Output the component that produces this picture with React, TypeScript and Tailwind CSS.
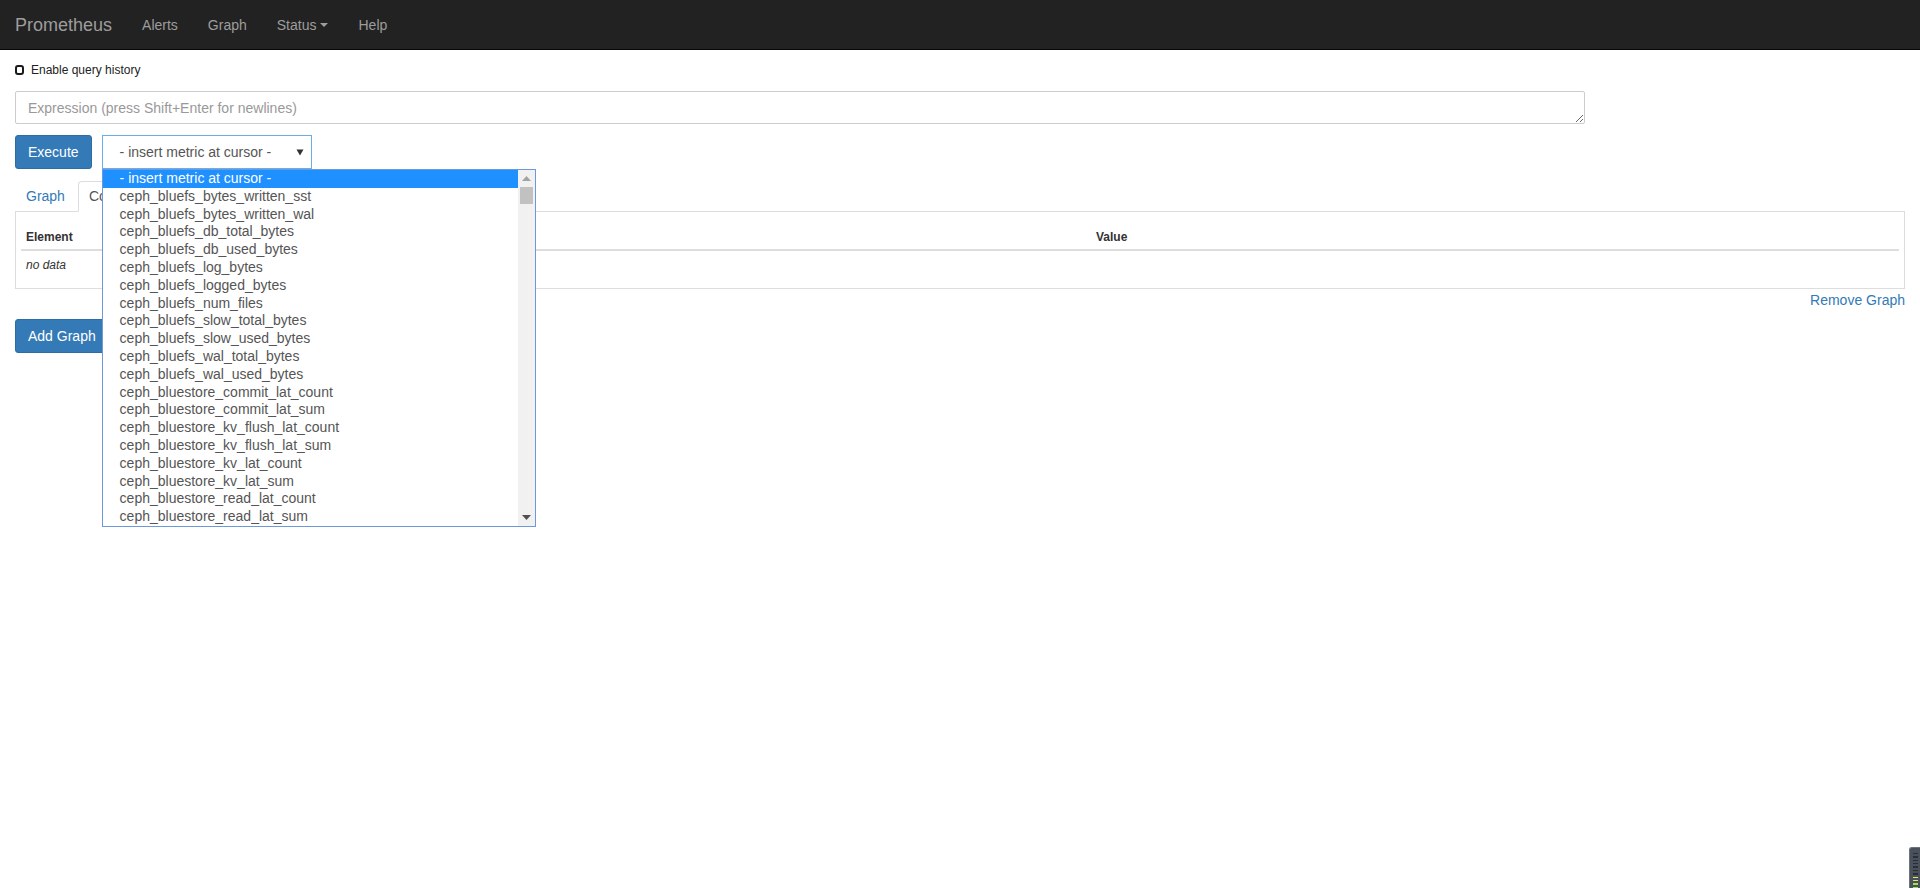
import React from "react";

const items = [
  "ceph_bluefs_bytes_written_sst",
  "ceph_bluefs_bytes_written_wal",
  "ceph_bluefs_db_total_bytes",
  "ceph_bluefs_db_used_bytes",
  "ceph_bluefs_log_bytes",
  "ceph_bluefs_logged_bytes",
  "ceph_bluefs_num_files",
  "ceph_bluefs_slow_total_bytes",
  "ceph_bluefs_slow_used_bytes",
  "ceph_bluefs_wal_total_bytes",
  "ceph_bluefs_wal_used_bytes",
  "ceph_bluestore_commit_lat_count",
  "ceph_bluestore_commit_lat_sum",
  "ceph_bluestore_kv_flush_lat_count",
  "ceph_bluestore_kv_flush_lat_sum",
  "ceph_bluestore_kv_lat_count",
  "ceph_bluestore_kv_lat_sum",
  "ceph_bluestore_read_lat_count",
  "ceph_bluestore_read_lat_sum",
];

export default function App() {
  return (
    <div className="relative min-h-[888px] w-full overflow-hidden bg-white font-['Liberation_Sans',Arial,Helvetica,sans-serif] text-[14px] leading-[20px] text-[#333]">
      {/* Navbar */}
      <nav className="flex h-[50px] items-center border-b border-[#080808] bg-[#222]">
        <span className="px-[15px] text-[18px] leading-[20px] text-[#9d9d9d]">Prometheus</span>
        <span className="px-[15px] text-[#9d9d9d]">Alerts</span>
        <span className="px-[15px] text-[#9d9d9d]">Graph</span>
        <span className="flex items-center px-[15px] text-[#9d9d9d]">
          Status
          <span className="ml-[4px] inline-block h-0 w-0 border-x-[4px] border-t-[4px] border-x-transparent border-t-[#9d9d9d]" />
        </span>
        <span className="px-[15px] text-[#9d9d9d]">Help</span>
      </nav>

      <div className="px-[15px]">
        {/* Query history */}
        <div className="mt-[12px] flex h-[16px] items-center">
          <span className="inline-block h-[10px] w-[9px] rounded-[3px] border-2 border-[#1a1a1a]" />
          <span className="ml-[7px] text-[12px] leading-[16px] text-[#222]">Enable query history</span>
        </div>

        {/* Expression */}
        <textarea
          className="mt-[13px] block h-[33px] w-[1570px] resize-y rounded-[2px] border border-[#ccc] px-[12px] py-[6px] text-[14px] leading-[20px] text-[#555] outline-none placeholder:text-[#999]"
          placeholder="Expression (press Shift+Enter for newlines)"
        />

        {/* Execute row */}
        <div className="mt-[11px] flex h-[34px] items-start">
          <button className="h-[34px] rounded-[3px] border border-[#2e6da4] bg-[#337ab7] px-[12px] text-[14px] leading-[20px] text-white">
            Execute
          </button>
          <div className="relative z-10 ml-[10px]">
            <div className="flex h-[34px] w-[210px] items-center justify-between border border-[#66afe9] bg-white pl-[17px] pr-[6px] text-[#555]">
              <span>- insert metric at cursor -</span>
              <svg width="8" height="7" viewBox="0 0 8 7" className="mr-[1px]">
                <path d="M0.5 0.5 L7.5 0.5 L4 6.5 Z" fill="#333" />
              </svg>
            </div>
            {/* Open listbox */}
            <div className="absolute left-0 top-[34px] h-[358px] w-[434px] overflow-hidden border border-[#6d98dc] bg-white">
              <div className="relative h-full pr-[17px]">
                <div className="h-[17.8px] bg-[#1e90ff] pl-[17px] text-[14px] leading-[17.8px] text-white">
                  - insert metric at cursor -
                </div>
                {items.map((it) => (
                  <div key={it} className="h-[17.8px] whitespace-nowrap pl-[17px] text-[14px] leading-[17.8px] text-[#555]">
                    {it}
                  </div>
                ))}
                {/* scrollbar */}
                <div className="absolute bottom-0 right-0 top-0 flex w-[17px] flex-col items-center bg-[#f1f1f1]">
                  <svg width="9" height="5" viewBox="0 0 9 5" className="mt-[6px]">
                    <path d="M0 5 L4.5 0 L9 5 Z" fill="#a3a3a3" />
                  </svg>
                  <div className="mt-[6px] h-[17px] w-[13px] bg-[#c1c1c1]" />
                  <div className="flex-1" />
                  <svg width="9" height="5" viewBox="0 0 9 5" className="mb-[6px]">
                    <path d="M0 0 L9 0 L4.5 5 Z" fill="#505050" />
                  </svg>
                </div>
              </div>
            </div>
          </div>
        </div>

        {/* Tabs */}
        <div className="mt-[12px] flex h-[31px] border-b border-[#ddd]">
          <div className="mr-[2px] h-[30px] rounded-t-[4px] border border-transparent px-[10px] py-[4px] leading-[20px] text-[#337ab7]">
            Graph
          </div>
          <div className="-mb-px h-[31px] rounded-t-[4px] border border-[#ddd] border-b-white bg-white px-[10px] py-[4px] leading-[20px] text-[#555]">
            Console
          </div>
        </div>

        {/* Panel */}
        <div className="h-[77px] border-x border-b border-[#ddd] px-[5px] pt-[5px]">
          <div className="grid h-[34px] grid-cols-[1070px_1fr] border-b-2 border-[#ddd] text-[12px] font-bold leading-[17px] text-[#333]">
            <div className="flex items-end px-[5px] pb-[3px]">Element</div>
            <div className="flex items-end px-[5px] pb-[3px]">Value</div>
          </div>
          <div className="px-[5px] pt-[6px] text-[12px] italic leading-[17px] text-[#333]">no data</div>
        </div>

        {/* Remove graph */}
        <div className="mt-[1px] flex h-[20px] justify-end">
          <span className="text-[#337ab7]">Remove Graph</span>
        </div>

        {/* Add graph */}
        <div className="mt-[9px]">
          <button className="h-[34px] rounded-[3px] border border-[#2e6da4] bg-[#337ab7] px-[12px] text-[14px] leading-[20px] text-white">
            Add Graph
          </button>
        </div>
      </div>

      {/* bottom-right overlay widget */}
      <div className="absolute bottom-0 right-0 flex h-[41px] w-[11px] flex-col items-end gap-[2px] rounded-tl-[3px] border-l border-t border-[#6b7280] bg-[#4a505c] pr-[2px] pt-[5px]">
        {[0, 1, 2, 3, 4, 5, 6, 7, 8, 9, 10].map((i) => (
          <div
            key={i}
            className={
              i < 7
                ? "h-[1.5px] w-[5px] bg-[#2a2e36]"
                : i < 9
                ? "h-[1.5px] w-[5px] bg-[#e6e65a]"
                : "h-[1.5px] w-[5px] bg-[#9fe05a]"
            }
          />
        ))}
      </div>
    </div>
  );
}
